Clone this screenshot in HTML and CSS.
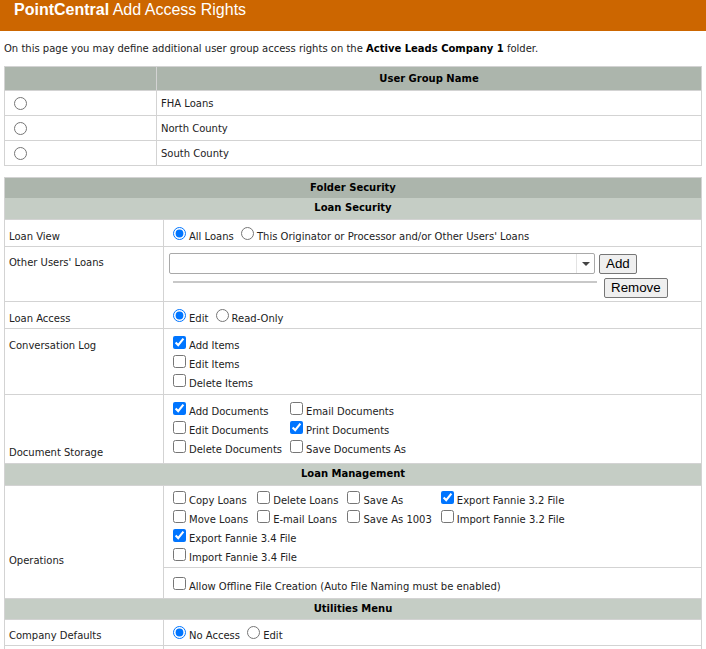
FILE: index.html
```html
<!DOCTYPE html>
<html lang="en">
<head>
<meta charset="utf-8">
<title>PointCentral Add Access Rights</title>
<link rel="stylesheet" href="styles.css">
</head>
<body>
<div class="titlebar"><span class="brand">PointCentral</span> Add Access Rights</div>
<div class="page">
  <p class="intro">On this page you may define additional user group access rights on the <b>Active Leads Company 1</b> folder.</p>

  <table class="grid groups">
    <colgroup><col class="c-sel"><col></colgroup>
    <tr class="hdr"><th></th><th>User Group Name</th></tr>
    <tr class="grow"><td class="sel"><input type="radio" name="grp"></td><td>FHA Loans</td></tr>
    <tr class="grow"><td class="sel"><input type="radio" name="grp"></td><td>North County</td></tr>
    <tr class="grow"><td class="sel"><input type="radio" name="grp"></td><td>South County</td></tr>
  </table>

  <table class="grid sec">
    <colgroup><col class="c-lbl"><col></colgroup>
    <tr class="hdr"><th colspan="2">Folder Security</th></tr>
    <tr class="sub"><th colspan="2">Loan Security</th></tr>
    <tr>
      <td class="lbl">Loan View</td>
      <td class="val"><label><input type="radio" name="lv" checked>All Loans</label> <label><input type="radio" name="lv">This Originator or Processor and/or Other Users' Loans</label></td>
    </tr>
    <tr class="top">
      <td class="lbl lbl-other">Other Users' Loans</td>
      <td class="val val-other">
        <div class="pick-row">
          <div class="combo"><span class="combo-text">&nbsp;</span><span class="combo-btn"><span class="caret"></span></span></div>
          <button type="button" class="btn">Add</button>
        </div>
        <div class="pick-row pick-row2">
          <div class="listbar"></div>
          <button type="button" class="btn btn-remove">Remove</button>
        </div>
      </td>
    </tr>
    <tr>
      <td class="lbl">Loan Access</td>
      <td class="val"><label><input type="radio" name="la" checked>Edit</label> <label><input type="radio" name="la">Read-Only</label></td>
    </tr>
    <tr>
      <td class="lbl">Conversation Log</td>
      <td class="val val-list">
        <div class="line"><label><input type="checkbox" checked>Add Items</label></div>
        <div class="line"><label><input type="checkbox">Edit Items</label></div>
        <div class="line"><label><input type="checkbox">Delete Items</label></div>
      </td>
    </tr>
    <tr class="top">
      <td class="lbl lbl-bottom">Document Storage</td>
      <td class="val val-list val-docs">
        <div class="cb-grid two">
          <label class="line"><input type="checkbox" checked>Add Documents</label>
          <label class="line"><input type="checkbox">Email Documents</label>
          <label class="line"><input type="checkbox">Edit Documents</label>
          <label class="line"><input type="checkbox" checked>Print Documents</label>
          <label class="line"><input type="checkbox">Delete Documents</label>
          <label class="line"><input type="checkbox">Save Documents As</label>
        </div>
      </td>
    </tr>
    <tr class="sub"><th colspan="2">Loan Management</th></tr>
    <tr class="top">
      <td class="lbl lbl-ops">Operations</td>
      <td class="val val-ops">
        <div class="ops-main">
          <div class="cb-grid four">
            <label class="line"><input type="checkbox">Copy Loans</label>
            <label class="line"><input type="checkbox">Delete Loans</label>
            <label class="line"><input type="checkbox">Save As</label>
            <label class="line"><input type="checkbox" checked>Export Fannie 3.2 File</label>
            <label class="line"><input type="checkbox">Move Loans</label>
            <label class="line"><input type="checkbox">E-mail Loans</label>
            <label class="line"><input type="checkbox">Save As 1003</label>
            <label class="line"><input type="checkbox">Import Fannie 3.2 File</label>
            <label class="line span-all"><input type="checkbox" checked>Export Fannie 3.4 File</label>
            <label class="line span-all"><input type="checkbox">Import Fannie 3.4 File</label>
          </div>
        </div>
        <div class="ops-foot">
          <label class="line"><input type="checkbox">Allow Offline File Creation (Auto File Naming must be enabled)</label>
        </div>
      </td>
    </tr>
    <tr class="sub util"><th colspan="2">Utilities Menu</th></tr>
    <tr class="tight">
      <td class="lbl">Company Defaults</td>
      <td class="val"><label><input type="radio" name="cd" checked>No Access</label> <label><input type="radio" name="cd">Edit</label></td>
    </tr>
    <tr class="blank"><td></td><td></td></tr>
  </table>
</div>
</body>
</html>
```
FILE: styles.css
```css
* { box-sizing: border-box; }
html, body { margin: 0; padding: 0; background: #fff; }
body {
  font-family: "DejaVu Sans", Verdana, sans-serif;
  font-size: 10px;
  line-height: 12px;
  color: #222;
}
.titlebar {
  height: 31px;
  background: #cc6600;
  color: #fff;
  font-family: "Liberation Sans", Arial, sans-serif;
  font-size: 16px;
  line-height: 18px;
  padding: 1px 14px 0;
}
.brand { font-weight: bold; }
.page { padding: 0 4px 20px; }
.intro { margin: 12px 0 11px; }
.intro b { color: #000; }

.grid {
  width: 100%;
  border-collapse: collapse;
  border: 1px solid #d3d3d3;
}
.grid td, .grid th {
  border: 1px solid #d3d3d3;
  padding: 0 4px;
}
.grid th { font-weight: bold; color: #000; text-align: center; }
.hdr th { background: #acb5ac; }
.sub th { background: #c5cdc5; }
.sec .hdr th, .sec .sub th { border-top: none; border-bottom: none; padding: 4px 4px 5px; }
.sec .hdr th { padding-bottom: 4px; }
.sec .util th { padding-bottom: 4px; }

/* user groups */
.c-sel { width: 152px; }
.groups .hdr th { height: 24px; padding: 0 4px; }
.groups .grow td { height: 25px; vertical-align: middle; padding-top: 1px; }
.sel input { margin: 0 3px 0 5px; vertical-align: middle; }
.groups { margin-bottom: 11px; }

/* security */
.c-lbl { width: 159px; }
.sec td { vertical-align: baseline; }
.sec .top td { vertical-align: top; }
.sec td.lbl { padding: 4px 4px 3px; }
.sec td.val { padding: 4px 5px 3px; }
.sec .tight td.val { padding-top: 3px; }
.val input[type="radio"] { margin: 3px 3px 0 4px; }
.val input[type="checkbox"] { margin: 3px 3px 3px 4px; }
.line { display: block; white-space: nowrap; }

.sec td.lbl-other { padding-top: 10px; }
.sec td.val-other { padding: 6px 5px 3px; }
.pick-row { display: flex; align-items: flex-start; gap: 4px; }
.pick-row2 { margin-top: 4px; gap: 7px; }
.combo {
  display: flex;
  width: 426px;
  height: 21px;
  border: 1px solid #a9a9a9;
  border-radius: 2px;
  background: #fff;
  font-family: "Liberation Sans", Arial, sans-serif;
  font-size: 13.33px;
  line-height: 19px;
}
.combo-text { flex: 1; }
.combo-btn {
  width: 18px;
  border-left: 1px solid #e3e3e3;
  display: flex;
  align-items: center;
  justify-content: center;
}
.caret {
  width: 0; height: 0;
  border-left: 4px solid transparent;
  border-right: 4px solid transparent;
  border-top: 4px solid #444;
}
.btn {
  font-family: "Liberation Sans", Arial, sans-serif;
  font-size: 13.33px;
  line-height: 16px;
  height: 20px;
  padding: 0 6px;
  margin: 1px 0 0;
  border: 1px solid #767676;
  border-radius: 2px;
  background: #efefef;
  color: #000;
}
.btn-remove { margin-top: 0; }
.listbar { width: 424px; height: 2px; margin: 3px 0 0 4px; background: #c8c8c8; }

.sec td.val-list { padding: 4px 5px 4px; }
.sec td.val-docs { padding: 4px 5px 7px; }
.sec .top td.lbl-bottom { vertical-align: bottom; padding-bottom: 4px; }
.cb-grid { display: grid; justify-content: start; column-gap: 4px; }
.cb-grid.two { grid-template-columns: repeat(2, max-content); }
.cb-grid.four { grid-template-columns: repeat(4, max-content); column-gap: 5px; }
.span-all { grid-column: 1 / -1; }

.sec td.val-ops { padding: 0; }
.sec .top td.lbl-ops { vertical-align: bottom; padding-bottom: 31px; }
.ops-main { padding: 2px 5px 3px; }
.ops-foot { border-top: 1px solid #d3d3d3; padding: 6px 5px 5px; }
.blank td { height: 27px; }
```
